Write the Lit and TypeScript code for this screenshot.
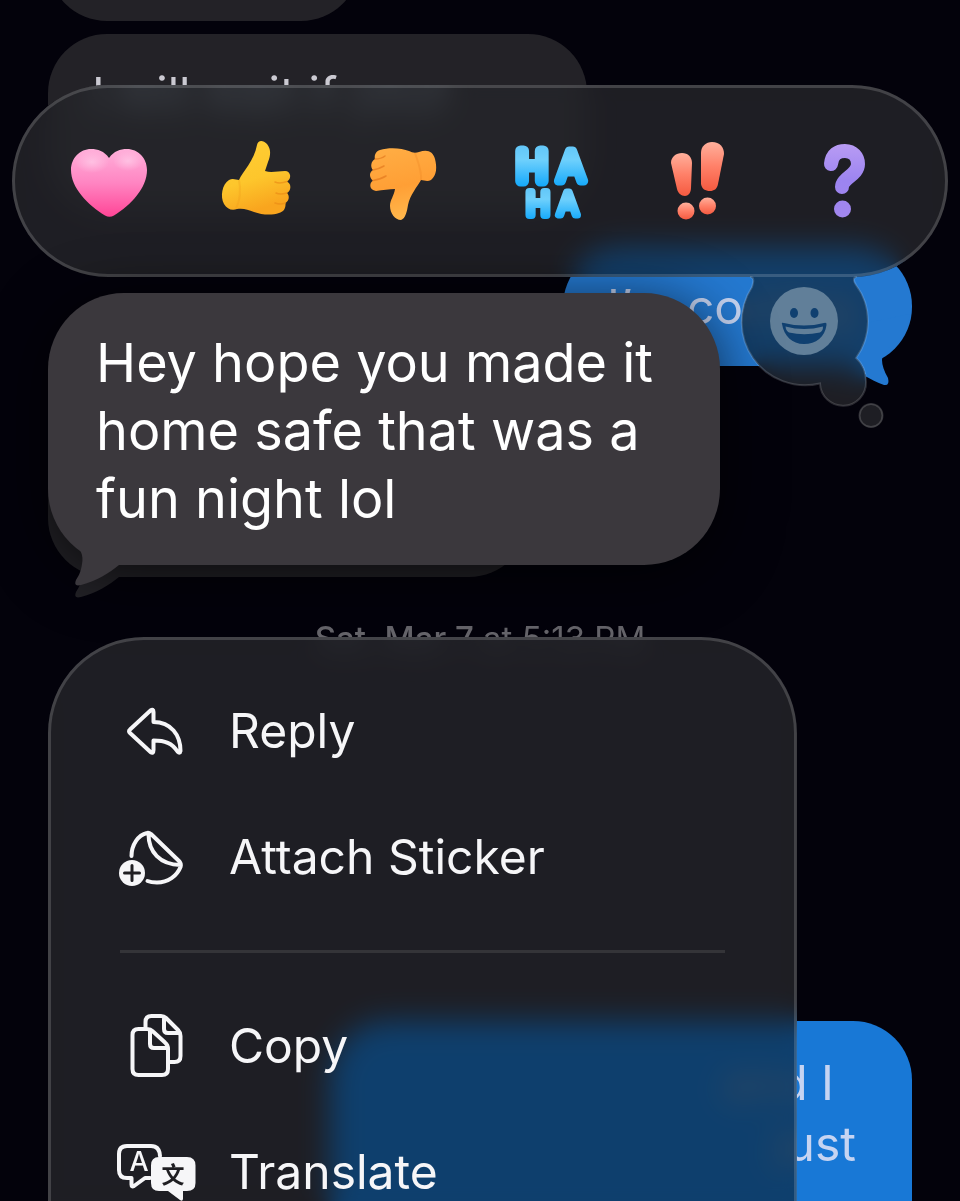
import { LitElement, html, css, svg } from "lit";
import { customElement } from "lit/decorators.js";

const reactions = [
  {
    label: "Heart",
    art: svg`<svg viewBox="67 140 84 84" aria-hidden="true">
      <defs>
        <linearGradient id="heart" x1="0" y1="0" x2="0" y2="1">
          <stop offset="0" stop-color="#ffb0da"/><stop offset=".5" stop-color="#ff85c2"/><stop offset="1" stop-color="#ff4596"/>
        </linearGradient>
        <radialGradient id="gleam">
          <stop offset="0" stop-color="#ffd6ee" stop-opacity=".6"/><stop offset="1" stop-color="#ffd6ee" stop-opacity="0"/>
        </radialGradient>
      </defs>
      <path fill="url(#heart)" d="M109 159C104 152 98 150 91 150C80 150 71 159 71 171C71 189 88 206 105 216.500Q109.500 219 114 216.500C131 206 147 189 147 171C147 159 138 150 127 150C120 150 114 152 109 159Z"/>
      <ellipse cx="92" cy="163" rx="17" ry="11" fill="url(#gleam)"/>
      <ellipse cx="128" cy="162" rx="15" ry="10" fill="url(#gleam)"/>
    </svg>`,
  },
  {
    label: "Thumbs up",
    art: svg`<svg viewBox="214 140 84 84" aria-hidden="true">
      <defs>
        <linearGradient id="up" x1="0" y1="0" x2=".3" y2="1">
          <stop offset="0" stop-color="#ffce35"/><stop offset=".6" stop-color="#fdc62c"/><stop offset="1" stop-color="#f9a51e"/>
        </linearGradient>
      </defs>
      <path fill="url(#up)" d="M257 146C258 141 263 141 267 145C271 150 271 156 268 163L265 172C271 174 278 172 285 172C291 172 292 180 287 182.500C292 185 291 192 287 194C290 197 289 202 285.500 204C286 210 283 213 279 214C272 216.500 262 216 254 213C248 210.500 243 209 237 210C232 212 227 210 224 205C220 198 222 185 229 181C233 179 236 181 239 181C243 172 254 162 257 146Z"/>
      <path d="M239 181C241 190 240 202 236 209" fill="none" stroke="#ee9a1a" stroke-width="2" opacity=".3"/>
      <path d="M287 182.500Q280 185 275 183M287 194Q280 196 276 194M285.500 204Q280 206 275 204" fill="none" stroke="#e98a16" stroke-width="1.500" stroke-linecap="round" opacity=".65"/>
    </svg>`,
  },
  {
    label: "Thumbs down",
    art: svg`<svg viewBox="362 140 84 84" aria-hidden="true">
      <defs>
        <linearGradient id="down" x1="0" y1="0" x2=".2" y2="1">
          <stop offset="0" stop-color="#ffae45"/><stop offset=".6" stop-color="#ff9f35"/><stop offset="1" stop-color="#ffb54a"/>
        </linearGradient>
      </defs>
      <path fill="url(#down)" d="M381 151C390 148 403 149 410 152Q415 155 420 153C428 150 434 152 436 160C438 168 438 176 432 181C428 183 425 181 422 181C418 188 411 196 409 206C408 213 406 220 402 221C396 221 391 214 391 207C391 201 395 197 396 190C390 190 384 191 377 192C370 191 370 184 374 181.500C370 179 370 173 374 171C371 168 372 162 376 160C375 156 377 152 381 151Z"/>
      <path d="M374 181.500Q382 180 387 177M374 171Q380 170 385 167M376 160Q382 160 386 157" fill="none" stroke="#e0741b" stroke-width="1.500" stroke-linecap="round" opacity=".65"/>
      <path d="M416 154C419 163 423 172 422 181" fill="none" stroke="#ec8425" stroke-width="2" opacity=".3"/>
    </svg>`,
  },
  {
    label: "Ha ha",
    art: svg`<svg viewBox="508 140 84 84" aria-hidden="true">
      <defs>
        <linearGradient id="haha-top" gradientUnits="userSpaceOnUse" x1="0" y1="146" x2="0" y2="188">
          <stop offset="0" stop-color="#62c6f8"/><stop offset=".35" stop-color="#6fd0fc"/><stop offset="1" stop-color="#12a8fb"/>
        </linearGradient>
        <linearGradient id="haha-low" gradientUnits="userSpaceOnUse" x1="0" y1="189" x2="0" y2="221">
          <stop offset="0" stop-color="#62c6f8"/><stop offset=".35" stop-color="#6fd0fc"/><stop offset="1" stop-color="#12a8fb"/>
        </linearGradient>
      </defs>
      <g class="balloon" stroke-linejoin="round" text-anchor="middle">
        <g fill="url(#haha-top)" stroke="url(#haha-top)">
          <text x="531" y="182" font-size="41" stroke-width="11">H</text>
          <text x="570" y="182" font-size="41" stroke-width="9">A</text>
        </g>
        <g fill="url(#haha-low)" stroke="url(#haha-low)">
          <text x="537" y="216" font-size="31" stroke-width="8">H</text>
          <text x="567" y="216" font-size="31" stroke-width="7">A</text>
        </g>
      </g>
    </svg>`,
  },
  {
    label: "Emphasize",
    art: svg`<svg viewBox="655 140 84 84" aria-hidden="true">
      <defs>
        <linearGradient id="bang" x1="0" y1="0" x2="0" y2="1">
          <stop offset="0" stop-color="#ffb09c"/><stop offset=".5" stop-color="#ff8068"/><stop offset="1" stop-color="#f55a40"/>
        </linearGradient>
      </defs>
      <g fill="url(#bang)">
        <path d="M670 164C670 158 675 154 681 154C687 154 691 158 691 164L690 189C690 194 687 197 684 197C680 197 677 194 676 190Z"/>
        <circle cx="685" cy="212" r="8.500"/>
        <path d="M700 154C700 147 705 143 711 143C719 143 723 148 723 155L717 185C716 190 713 192 709 192C704 192 701 190 700 185Z"/>
        <circle cx="706.500" cy="207" r="8.500"/>
      </g>
    </svg>`,
  },
  {
    label: "Question",
    art: svg`<svg viewBox="803 140 84 84" aria-hidden="true">
      <defs>
        <linearGradient id="ask" gradientUnits="userSpaceOnUse" x1="0" y1="144" x2="0" y2="220">
          <stop offset="0" stop-color="#b99cf4"/><stop offset=".5" stop-color="#9c84f0"/><stop offset="1" stop-color="#a287ee"/>
        </linearGradient>
      </defs>
      <path d="M831 165C832 155 838 152 845 152C853 152 858 158 858 165C858 176 842 179 842 188" fill="none" stroke="url(#ask)" stroke-width="14" stroke-linecap="round"/>
      <circle cx="842.500" cy="210" r="8.500" fill="url(#ask)"/>
    </svg>`,
  },
];

const icons = {
  reply: svg`<svg viewBox="114 689 84 84" aria-hidden="true">
    <path class="line" d="M130 729.500L150.500 710.500Q153.500 708.500 153.500 712V722C171 722 180.500 735 180.500 751Q180 754 177.500 751.500C172 743 165 740.500 153.500 740.500V750Q153.500 754 150.500 752L130 733Q128 731.200 130 729.500Z"/>
  </svg>`,
  sticker: svg`<svg viewBox="114 815 84 84" aria-hidden="true">
    <path class="line" d="M131.500 856C131.500 845 138 835 147 833Q149 832.500 151 834L179.500 861.500Q181.500 864 180.500 867C177 876 168 882.500 157 882.500Q151 882.500 147.500 881M148.500 834C148.500 852 160 864.500 180.500 865"/>
    <circle cx="132" cy="873" r="13" fill="#f6f6f8"/>
    <path d="M132 865.500V880.500M124.500 873H139.500" stroke="#1f1e22" stroke-width="3" stroke-linecap="round"/>
  </svg>`,
  copy: svg`<svg viewBox="114 1004 84 84" aria-hidden="true">
    <path class="line" d="M145.500 1028V1022Q145.500 1016 151.500 1016H161Q164 1016 166 1018L178 1030Q180.500 1032.500 180.500 1036V1056Q180.500 1062 174.500 1062H169M164 1017V1029Q164 1033 168 1033H180M138.500 1029H147Q150.500 1029 153 1031.500L165 1042.500Q168 1045 168 1049V1069Q168 1075 162 1075H138.500Q132.500 1075 132.500 1069V1035Q132.500 1029 138.500 1029ZM150 1030V1044Q150 1048 154 1048H168"/>
  </svg>`,
  translate: svg`<svg viewBox="114 1130 84 84" aria-hidden="true">
    <path class="line" d="M150 1178H145L134 1186Q131.500 1187.500 131.500 1184.500V1178H127Q119 1178 119 1170V1154Q119 1146 127 1146H151Q159.500 1146 160 1156"/>
    <path fill="#f6f6f8" d="M159 1157H187Q195.500 1157 195.500 1165.500V1183Q195.500 1191 187 1191H183V1199Q182.500 1202 180 1200L168 1191H159Q151 1191 151 1183V1165.500Q151 1157 159 1157Z"/>
    <text class="latin" x="139" y="1171" font-size="27" text-anchor="middle">A</text>
    <text class="han" x="173" y="1183" font-size="23" text-anchor="middle">文</text>
  </svg>`,
};

const menuGroups = [
  [
    { label: "Reply", icon: icons.reply },
    { label: "Attach Sticker", icon: icons.sticker },
  ],
  [
    { label: "Copy", icon: icons.copy },
    { label: "Translate", icon: icons.translate },
  ],
];

/* Several light blurs in a row stay dense up to the panel's edge */
const frostPasses = [0, 1, 2, 3, 4];

@customElement("app-root")
export class AppRoot extends LitElement {
  static styles = css`
    :host {
      display: block;
      position: relative;
      height: 100vh;
      overflow: hidden;
      background: #03020b;
      color: #fff;
      font-family: Inter, "Liberation Sans", sans-serif;
    }
    * {
      box-sizing: border-box;
    }
    button {
      border: 0;
      margin: 0;
      padding: 0;
      background: none;
      color: inherit;
      font: inherit;
      cursor: pointer;
    }
    .defs {
      position: absolute;
      width: 0;
      height: 0;
    }

    /* Dimmed conversation behind the menu, scrolled part of the way */
    .thread {
      display: flex;
      flex-direction: column;
      align-items: flex-start;
      padding: 0 48px;
      margin-top: -98px;
    }
    .msg {
      margin: 0;
      position: relative;
      flex: none;
      padding: 29px 44px;
      border-radius: 59px;
      background: #232227;
      color: #cbcad2;
      font-size: 47px;
      line-height: 61px;
      min-height: 119px;
      white-space: nowrap;
    }
    .first {
      width: 312px;
    }
    .second {
      margin-top: 13px;
      width: 539px;
      height: 180px;
    }
    .sent {
      align-self: flex-end;
      background: #2479d1;
      color: #c6d4f2;
      font-size: 48px;
    }
    .coming {
      margin-top: 33px;
      width: 349px;
    }
    .source {
      margin-top: 24px;
      width: 480px;
      height: 187px;
    }
    .stamp {
      align-self: center;
      margin: 41px 0 0;
      font-size: 33px;
      line-height: 40px;
      color: #66656b;
    }
    .stamp b {
      font-weight: 500;
    }
    .long {
      margin-top: 363px;
      width: 582px;
      height: 300px;
      padding: 31px 56px 31px 44px;
      background: #1878d6;
    }
    .line-a {
      display: block;
      text-align: right;
      padding-right: 22px;
    }
    .line-b {
      display: block;
      text-align: right;
    }
    .tail {
      position: absolute;
      display: block;
    }
    .tail-left {
      left: 20px;
      bottom: -22px;
      width: 56px;
      height: 52px;
    }
    .tail-right {
      right: 0;
      bottom: -20px;
      width: 60px;
      height: 80px;
    }

    /* Overlay */
    .overlay {
      position: absolute;
      inset: 0;
      display: flex;
      flex-direction: column;
      align-items: flex-start;
      padding: 85px 12px 0;
    }

    /* Glass layers reach 60px past the panel and are clipped back to it */
    .frost,
    .tint {
      position: absolute;
      inset: -60px;
      clip-path: inset(60px round 96px);
      pointer-events: none;
    }
    .frost {
      backdrop-filter: blur(7px);
    }
    .tint {
      backdrop-filter: url(#glass);
    }
    .cloud {
      inset: 129px -1px auto auto;
      width: 274px;
      height: 280px;
      clip-path: path(
        "M74 63H182C178 64 178 67 181 71C197 92 197 122 181 144C187 149 191 158 191 168A23 23 0 0 1 145 169.500A63.500 63.500 0 0 1 77 73C79 67 79 64 75 63ZM196 189.500A12 12 0 1 0 196.100 189.500Z"
      );
    }
    .rim {
      position: absolute;
      inset: 0;
      border: 3px solid rgba(255, 255, 255, 0.16);
      border-radius: 96px;
      pointer-events: none;
    }
    .reactions {
      position: relative;
      align-self: stretch;
    }
    .bar {
      display: flex;
      height: 192px;
      padding: 0 29px 0 23px;
    }
    .reaction {
      position: relative;
      flex: 1;
      display: flex;
      align-items: center;
      justify-content: center;
    }
    .reaction svg {
      width: 84px;
      height: 84px;
      overflow: visible;
    }
    .balloon {
      font-family: Inter, sans-serif;
      font-weight: 300;
    }
    .thought {
      position: absolute;
      right: 59px;
      top: 189px;
      width: 154px;
      height: 160px;
    }
    .thought-rim {
      position: absolute;
      inset: 0;
      width: 154px;
      height: 160px;
    }
    .more {
      position: absolute;
      left: 35px;
      top: 13px;
      width: 68px;
      height: 68px;
    }
    .more svg {
      display: block;
      width: 68px;
      height: 68px;
    }
    .selected {
      position: relative;
      margin: 16px 0 0 36px;
      max-width: 72%;
      width: 672px;
      padding: 36px 40px 32px 48px;
      border-radius: 76px;
      background: #3b383d;
      box-shadow: 0 10px 60px rgba(0, 0, 0, 0.7);
      font-size: 54px;
      line-height: 68px;
    }
    .menu {
      position: relative;
      flex: none;
      width: 78vw;
      margin: 72px 0 0 36px;
      padding: 31px 3px 160px;
      font-size: 48px;
      line-height: 60px;
    }
    .item {
      position: relative;
      display: flex;
      align-items: center;
      gap: 31px;
      width: 100%;
      height: 126px;
      padding: 0 63px;
      text-align: left;
      color: #f6f6f8;
    }
    .item svg {
      flex: none;
      width: 84px;
      height: 84px;
    }
    .rule {
      position: relative;
      height: 3px;
      margin: 30px 69px;
      border: 0;
      background: #343438;
    }
    .line {
      fill: none;
      stroke: #f6f6f8;
      stroke-width: 4;
      stroke-linecap: round;
      stroke-linejoin: round;
    }
    .latin {
      fill: #f6f6f8;
      font-family: Inter, sans-serif;
      font-weight: 500;
    }
    .han {
      fill: #1f1e22;
      font-family: "Noto Sans CJK SC", sans-serif;
      font-weight: 700;
    }
  `;

  private leftTail(color: string) {
    return html`<svg class="tail tail-left" viewBox="0 0 56 52" aria-hidden="true">
      <path fill=${color} d="M6 8C12 13 16 20 14 29C13 37 10 42 8 45Q5 52 13 50C29 46 41 38 51 30H56V0H6Z" />
    </svg>`;
  }

  render() {
    return html`
      <svg class="defs" aria-hidden="true">
        <filter id="glass" color-interpolation-filters="sRGB" x="0" y="0" width="100%" height="100%">
          <feColorMatrix
            type="matrix"
            values=".3 -.05 -.08 0 .118  -.1 .3 0 0 .116  -.17 0 .38 0 .125  0 0 0 1 0"
          />
        </filter>
      </svg>

      <section class="thread" aria-hidden="true">
        <p class="msg first"></p>
        <p class="msg second">I will wait if your</p>
        <p class="msg sent coming">
          I’m coming<svg class="tail tail-right" viewBox="0 0 60 80">
            <path fill="#2479d1" d="M58 8C56 24 46 34 36 42C28 48 28 58 36 72Q38 80 32 79C18 74 6 66 0 60V20Z" />
          </svg>
        </p>
        <p class="msg source">${this.leftTail("#232227")}</p>
        <p class="stamp"><b>Sat, Mar 7</b> at 5:13 PM</p>
        <p class="msg sent long"><span class="line-a">and I</span><span class="line-b">just</span></p>
      </section>

      <section class="overlay">
        <div class="reactions">
          ${frostPasses.map(() => html`<div class="frost"></div><div class="frost cloud"></div>`)}
          <div class="tint"></div>
          <div class="tint cloud"></div>
          <div class="rim"></div>
          <div class="bar" role="toolbar" aria-label="Reactions">
            ${reactions.map((r) => html`<button class="reaction" aria-label=${r.label}>${r.art}</button>`)}
          </div>
          <div class="thought">
            <svg class="thought-rim" viewBox="0 0 154 160" fill="none" stroke="#fff" stroke-opacity=".16" stroke-width="2" aria-hidden="true">
              <path d="M122 3C118 3 118 6 121 11C137 32 137 62 121 84C127 89 131 98 131 108A23 23 0 0 1 85 109.500A63.500 63.500 0 0 1 17 13C19 6 19 3 15 3" />
              <circle cx="136" cy="141.500" r="11.500" />
            </svg>
            <button class="more" aria-label="More reactions">
              <svg viewBox="0 0 68 68" aria-hidden="true">
                <circle cx="34" cy="34" r="34" fill="#617f99" />
                <g fill="#104070">
                  <ellipse cx="24" cy="26" rx="4" ry="5" />
                  <ellipse cx="44.500" cy="26" rx="4" ry="5" />
                  <path d="M12 37Q11 35 14 36Q34 41 54 36Q57 35 56.500 38C55 50 46 57 34 57C22 57 14 49 12 37Z" />
                </g>
                <path fill="#617f99" d="M15.500 39.500Q34 44.500 53 39.500Q53 44 50 45.500Q34 49 19 45.500Q16 44 15.500 39.500Z" />
              </svg>
            </button>
          </div>
        </div>

        <div class="selected">Hey hope you made it home safe that was a fun night lol${this.leftTail("#3b383d")}</div>

        <nav class="menu" aria-label="Message actions">
          ${frostPasses.map(() => html`<div class="frost"></div>`)}
          <div class="tint"></div>
          <div class="rim"></div>
          ${menuGroups.map(
            (group, i) => html`
              ${i > 0 ? html`<hr class="rule" />` : null}
              ${group.map((item) => html`<button class="item">${item.icon}<span>${item.label}</span></button>`)}
            `
          )}
        </nav>
      </section>
    `;
  }
}
